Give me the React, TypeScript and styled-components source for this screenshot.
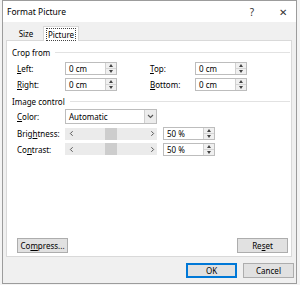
import React from "react";
import styled, { createGlobalStyle, css } from "styled-components";

const Global = createGlobalStyle`
  html, body { margin: 0; padding: 0; background: #f4f4f4; }
  body { font-family: "Noto Sans", "Open Sans", sans-serif; font-size: 8px; color: #000; }
  * { box-sizing: border-box; }
  u { text-decoration-thickness: 1px; text-underline-offset: 1px; }
`;

const Dialog = styled.div`
  margin-left: 2px;
  width: 295px;
  height: 284px;
  border: 1px solid #9c9c9c;
  background: #f0f0f0;
  display: flex;
  flex-direction: column;
`;

const TitleBar = styled.div`
  height: 21px;
  background: #fff;
  display: flex;
  align-items: center;
  padding-left: 4px;
  font-size: 8.5px;
`;

const TitleText = styled.span`
  flex: 1;
`;

const TitleBtn = styled.span<{ $w: number }>`
  width: ${(p) => p.$w}px;
  text-align: center;
  font-size: 10px;
  color: #333;
`;

const Body = styled.div`
  flex: 1;
  display: flex;
  flex-direction: column;
  padding: 0 4px 0 3px;
`;

const Tabs = styled.div`
  height: 18px;
  display: flex;
  align-items: flex-end;
  padding-left: 6px;
  gap: 3px;
`;

const Tab = styled.div<{ $active?: boolean }>`
  height: 14px;
  display: flex;
  align-items: center;
  justify-content: center;
  position: relative;
  ${(p) =>
    p.$active
      ? css`
          width: 36px;
          background: #fff;
          border: 1px solid #d9d9d9;
          border-bottom: none;
          margin-bottom: -1px;
          height: 15px;
          z-index: 1;
        `
      : css`
          width: 28px;
        `}
`;

const Focus = styled.span`
  outline: 1px dotted #444;
  outline-offset: 0px;
  padding: 0 1px;
`;

const Panel = styled.div`
  height: 217px;
  background: #fff;
  border: 1px solid #d9d9d9;
  display: flex;
  flex-direction: column;
  padding: 5px 1px 3px 5px;
`;

const SectionHead = styled.div<{ $mt?: number }>`
  height: 12px;
  margin-top: ${(p) => p.$mt ?? 0}px;
  display: flex;
  align-items: center;
  gap: 5px;
  &::after {
    content: "";
    flex: 1;
    height: 1px;
    background: #e2e2e2;
  }
`;

const Grid = styled.div<{ $cols: string; $mt: number; $rows: string; $rg: number }>`
  display: grid;
  grid-template-columns: ${(p) => p.$cols};
  grid-template-rows: ${(p) => p.$rows};
  row-gap: ${(p) => p.$rg}px;
  align-items: center;
  margin-top: ${(p) => p.$mt}px;
  padding-left: 5px;
`;

const Label = styled.span`
  white-space: nowrap;
`;

const Spin = styled.div<{ $ml?: number }>`
  height: 13px;
  display: flex;
  border: 1px solid #bdbdbd;
  background: #fff;
  margin-left: ${(p) => p.$ml ?? 0}px;
`;

const SpinText = styled.div`
  flex: 1;
  padding-left: 3px;
  display: flex;
  align-items: center;
`;

const SpinBtns = styled.div`
  width: 11px;
  display: flex;
  flex-direction: column;
  border-left: 1px solid #d0d0d0;
  background: #f0f0f0;
`;

const Arrow = styled.div<{ $down?: boolean }>`
  flex: 1;
  display: flex;
  align-items: center;
  justify-content: center;
  & + & { border-top: 1px solid #d6d6d6; }
  &::before {
    content: "";
    border-left: 2.5px solid transparent;
    border-right: 2.5px solid transparent;
    ${(p) =>
      p.$down
        ? css`border-top: 3px solid #444;`
        : css`border-bottom: 3px solid #444;`}
  }
`;

const Select = styled.div`
  height: 15px;
  display: flex;
  border: 1px solid #bdbdbd;
  background: #fff;
`;

const SelectText = styled.div`
  flex: 1;
  padding-left: 3px;
  display: flex;
  align-items: center;
`;

const SelectBtn = styled.div`
  width: 12px;
  border-left: 1px solid #cfcfcf;
  background: #ececec;
  display: flex;
  align-items: center;
  justify-content: center;
`;

const Slider = styled.div`
  height: 12px;
  background: #ebebeb;
  display: flex;
  align-items: center;
  padding: 0 2px 0 4px;
`;

const Thumb = styled.div`
  width: 12px;
  height: 12px;
  background: #cdcdcd;
  margin-left: 31px;
  margin-right: auto;
`;

const Spacer = styled.div`
  flex: 1;
`;

const ButtonRow = styled.div<{ $pl: number; $pr: number }>`
  display: flex;
  justify-content: space-between;
  gap: 7px;
  padding: 0 ${(p) => p.$pr}px 0 ${(p) => p.$pl}px;
`;

const Button = styled.div<{ $primary?: boolean }>`
  width: 51px;
  height: 15px;
  display: flex;
  align-items: center;
  justify-content: center;
  background: #e1e1e1;
  border: 1px solid ${(p) => (p.$primary ? "#0078d7" : "#adadad")};
  ${(p) => p.$primary && css`box-shadow: inset 0 0 0 1px #0078d7;`}
`;

const Footer = styled.div`
  display: flex;
  justify-content: flex-end;
  gap: 6px;
  padding: 6px 0 0 0;
  margin-right: -2px;
`;

const Chevron = ({ dir }: { dir: "l" | "r" | "d" }) => {
  const d =
    dir === "l" ? "M4 1 L1.5 3.5 L4 6" : dir === "r" ? "M1.5 1 L4 3.5 L1.5 6" : "M1 2 L3.5 4.5 L6 2";
  return (
    <svg width={dir === "d" ? 7 : 5} height={7} viewBox={dir === "d" ? "0 0 7 7" : "0 0 5.5 7"}>
      <path d={d} fill="none" stroke="#555" strokeWidth="1.1" />
    </svg>
  );
};

const SpinInput = ({ value, ml }: { value: string; ml?: number }) => (
  <Spin $ml={ml}>
    <SpinText>{value}</SpinText>
    <SpinBtns>
      <Arrow />
      <Arrow $down />
    </SpinBtns>
  </Spin>
);

const SliderCtl = () => (
  <Slider>
    <Chevron dir="l" />
    <Thumb />
    <Chevron dir="r" />
  </Slider>
);

export default function App() {
  return (
    <>
      <Global />
      <Dialog>
        <TitleBar>
          <TitleText>Format Picture</TitleText>
          <TitleBtn $w={36}>?</TitleBtn>
          <TitleBtn $w={26}>✕</TitleBtn>
        </TitleBar>
        <Body>
          <Tabs>
            <Tab>Size</Tab>
            <Tab $active>
              <Focus>Picture</Focus>
            </Tab>
          </Tabs>
          <Panel>
            <SectionHead>Crop from</SectionHead>
            <Grid $cols="48px 52px 33px 45px 52px" $rows="13px 13px" $mt={4} $rg={3}>
              <Label>
                <u>L</u>eft:
              </Label>
              <SpinInput value="0 cm" />
              <span />
              <Label>
                <u>T</u>op:
              </Label>
              <SpinInput value="0 cm" />
              <Label>
                <u>R</u>ight:
              </Label>
              <SpinInput value="0 cm" />
              <span />
              <Label>
                <u>B</u>ottom:
              </Label>
              <SpinInput value="0 cm" />
            </Grid>
            <SectionHead $mt={4}>Image control</SectionHead>
            <Grid $cols="48px 92px 58px" $rows="15px 12px 12px" $mt={2} $rg={3.5}>
              <Label>
                <u>C</u>olor:
              </Label>
              <Select>
                <SelectText>Automatic</SelectText>
                <SelectBtn>
                  <Chevron dir="d" />
                </SelectBtn>
              </Select>
              <span />
              <Label>
                Brig<u>h</u>tness:
              </Label>
              <SliderCtl />
              <SpinInput value="50 %" ml={6} />
              <Label>
                Co<u>n</u>trast:
              </Label>
              <SliderCtl />
              <SpinInput value="50 %" ml={6} />
            </Grid>
            <Spacer />
            <ButtonRow $pl={5} $pr={2}>
              <Button>
                Co<u>m</u>press...
              </Button>
              <Button>
                Re<u>s</u>et
              </Button>
            </ButtonRow>
          </Panel>
          <Footer>
            <Button $primary>OK</Button>
            <Button>Cancel</Button>
          </Footer>
        </Body>
      </Dialog>
    </>
  );
}
